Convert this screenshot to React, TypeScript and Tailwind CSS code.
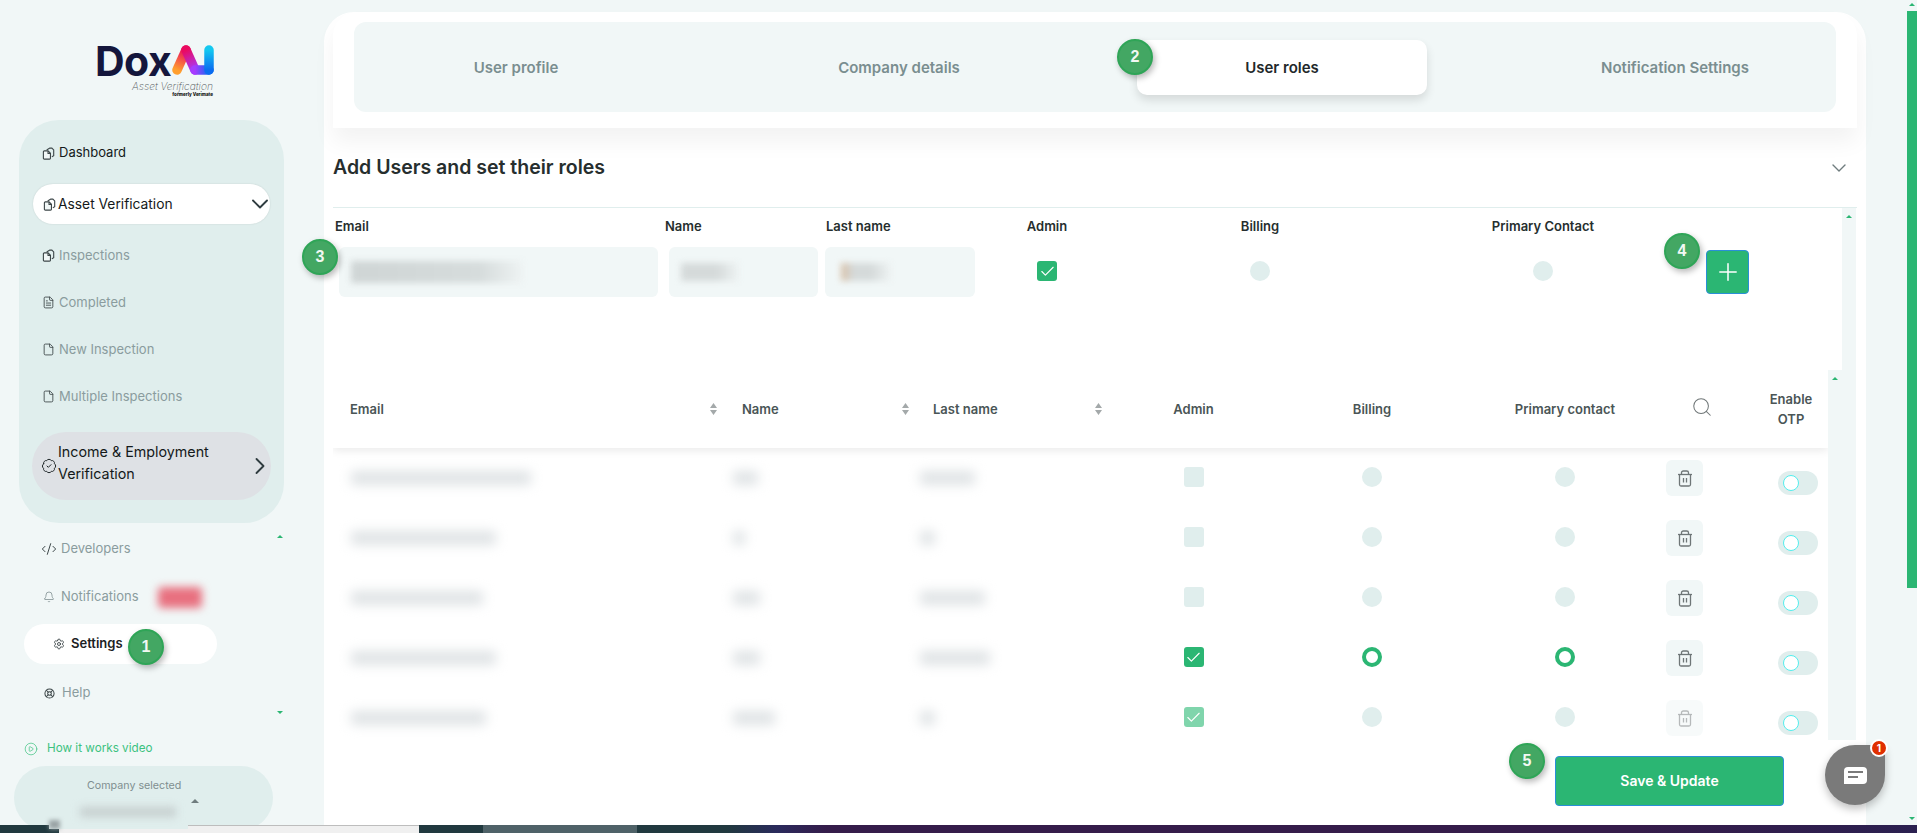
import {
  BadgeCheck,
  Bell,
  Check,
  ChevronDown,
  ChevronRight,
  CirclePlay,
  CodeXml,
  File,
  FileText,
  LifeBuoy,
  Plus,
  Search,
  Settings,
} from "lucide-react";

function DocsIcon({ className = "" }: { className?: string }) {
  return (
    <svg viewBox="0 0 14 14" className={`h-[13px] w-[13px] shrink-0 ${className}`} fill="none" stroke="#3c4648" strokeWidth="1.2">
      <path d="M5 3.2 8.4 1.2h2.2l2 2v6.2l-2 1" />
      <path d="M1.5 5.2a1 1 0 0 1 1-1h4l2.6 2.6v5.2a1 1 0 0 1-1 1H2.500a1 1 0 0 1-1-1z" fill="#f1f7f7" />
      <path d="M6.500 4.200v2.800h2.600" />
    </svg>
  );
}

function Arrow({ down = false, className = "" }: { down?: boolean; className?: string }) {
  return (
    <svg viewBox="0 0 6 3" className={`h-[3px] w-[6px] ${className}`} fill="#2bb673">
      <path d={down ? "M0 0h6L3 3z" : "M0 3h6L3 0z"} />
    </svg>
  );
}

function SortIcon() {
  return (
    <svg viewBox="0 0 7 12" className="mb-[2px] h-[12px] w-[7px]" fill="#a4a9aa">
      <path d="M3.500 0 7 5H0zM0 7h7l-3.500 5z" />
    </svg>
  );
}

function TrashIcon() {
  return (
    <svg viewBox="0 0 16 17" className="h-[17px] w-[16px]" fill="none" stroke="#6f7677" strokeWidth="1.3">
      <path d="M1 4.500h14" />
      <path d="M4.500 4.500V2.800a1.800 1.800 0 0 1 1.800-1.800h3.400a1.800 1.800 0 0 1 1.800 1.800v1.700" />
      <path d="M2.500 4.500v10a1.500 1.500 0 0 0 1.500 1.500h8a1.500 1.500 0 0 0 1.500-1.500v-10" />
      <path d="M6.500 8v4.500M9.500 8v4.500" />
    </svg>
  );
}

function StepBadge({ n, className }: { n: number; className: string }) {
  return (
    <div
      className={`absolute z-30 flex h-[36px] w-[36px] items-center justify-center rounded-full border-2 border-[#2fa557] bg-[#43a763] font-['Liberation_Sans',sans-serif] text-[16px] font-bold text-[#f2f8f3] shadow-[2px_3px_6px_rgba(0,0,0,0.28)] ${className}`}
    >
      {n}
    </div>
  );
}

function Logo() {
  return (
    <div className="ml-[97px] w-[116px]">
      <div className="flex h-[36px] items-end">
        <span className="ml-[-2px] font-['Inter',sans-serif] text-[41px] leading-[36px] font-bold tracking-[-0.5px] text-[#14163c]">
          Dox
        </span>
        <svg viewBox="0 0 46 36" className="mb-[-1px] ml-auto h-[36px] w-[46px] shrink-0 -mr-[3px]" fill="none" strokeWidth="9.500" strokeLinecap="round">
          <defs>
            <linearGradient id="a1" gradientUnits="userSpaceOnUse" x1="6" y1="26" x2="15" y2="6">
              <stop offset="0" stopColor="#ff9f2e" />
              <stop offset="1" stopColor="#ea0a60" />
            </linearGradient>
            <linearGradient id="a2" gradientUnits="userSpaceOnUse" x1="15" y1="6" x2="24" y2="26">
              <stop offset="0" stopColor="#ea0a60" />
              <stop offset="1" stopColor="#a63bff" />
            </linearGradient>
            <linearGradient id="a3" gradientUnits="userSpaceOnUse" x1="24" y1="26" x2="38" y2="26">
              <stop offset="0" stopColor="#a63bff" />
              <stop offset="1" stopColor="#0a6cf0" />
            </linearGradient>
            <linearGradient id="a4" gradientUnits="userSpaceOnUse" x1="38" y1="26" x2="38" y2="6">
              <stop offset="0" stopColor="#0a6cf0" />
              <stop offset="1" stopColor="#14c8f0" />
            </linearGradient>
          </defs>
          <path d="M6 26 15 6" stroke="url(#a1)" />
          <path d="M15 6l9 20" stroke="url(#a2)" />
          <path d="M24 26h14" stroke="url(#a3)" />
          <path d="M38 26V6" stroke="url(#a4)" />
        </svg>
      </div>
      <div className="mt-[2px] text-right text-[10.300px] leading-[11px] font-extralight text-[#555b60] italic">Asset Verification</div>
      <div className="text-right text-[4.500px] leading-[6px] font-extrabold text-[#111]">formerly Verimate</div>
    </div>
  );
}

const subItems = [
  { label: "Inspections", icon: <DocsIcon /> },
  { label: "Completed", icon: <FileText size={13} strokeWidth={1.6} color="#3c4648" /> },
  { label: "New Inspection", icon: <File size={13} strokeWidth={1.6} color="#3c4648" /> },
  { label: "Multiple Inspections", icon: <File size={13} strokeWidth={1.6} color="#3c4648" /> },
];

function Sidebar() {
  return (
    <aside className="flex w-[324px] shrink-0 flex-col overflow-hidden">
      <div className="h-[120px] shrink-0 pt-[43px]">
        <Logo />
      </div>

      <nav className="ml-[19px] h-[403px] w-[265px] shrink-0 rounded-[40px] bg-[#e0eeed] pt-[13px]">
        <div className="flex h-[40px] items-center gap-[4px] pl-[23px] text-[13px] text-[#14191a]">
          <DocsIcon />
          Dashboard
        </div>
        <div className="mt-[11px] ml-[14px] flex h-[40px] w-[237px] items-center rounded-full bg-white pl-[10px] text-[13.800px] text-[#14191a] shadow-[0_0_2px_rgba(0,0,0,0.12)]">
          <DocsIcon className="mr-[2px]" />
          Asset Verification
          <ChevronDown size={28} strokeWidth={1.6} color="#2f3c40" className="mr-[-4px] ml-auto" />
        </div>
        <div className="mt-[8px]">
          {subItems.map((item) => (
            <div key={item.label} className="flex h-[47px] items-center gap-[4px] pl-[23px] text-[13px] text-[#8a9c9e]">
              {item.icon}
              {item.label}
            </div>
          ))}
        </div>
        <div className="mt-[12px] ml-[13px] flex h-[68px] w-[239px] items-center rounded-[34px] bg-[#dee1e5] pl-[9px] text-[14.300px] leading-[22px] text-[#14191a]">
          <BadgeCheck size={16} strokeWidth={1.5} className="mr-[1px] shrink-0" color="#1e2628" />
          <span className="pb-[7px]">
            Income &amp; Employment
            <br />
            Verification
          </span>
          <ChevronRight size={28} strokeWidth={1.6} color="#2f3c40" className="mr-[-3px] ml-auto" />
        </div>
      </nav>

      <div className="relative h-[202px] shrink-0 pt-[2px] text-[13px] text-[#8a9c9e]">
        <Arrow className="absolute top-[12px] left-[277px]" />
        <Arrow down className="absolute top-[188px] left-[277px]" />
        <div className="flex h-[48px] items-center gap-[4px] pl-[41px]">
          <CodeXml size={16} strokeWidth={1.5} color="#3c4648" />
          Developers
        </div>
        <div className="flex h-[48px] items-center pl-[43px]">
          <Bell size={12} strokeWidth={1.5} color="#7a8a8c" className="mr-[6px]" />
          <span className="w-[97px]">Notifications</span>
          <div className="h-[21px] w-[44px] rounded-[4px] bg-[#e8707f] blur-[4px]" />
        </div>
        <div className="mt-[3px] ml-[24px] flex h-[40px] w-[193px] items-center gap-[6px] rounded-full bg-white pl-[29px] font-semibold text-[#1b2123]">
          <Settings size={12} strokeWidth={1.8} color="#3c4648" />
          Settings
        </div>
        <div className="mt-[5px] flex h-[48px] items-center gap-[7px] pl-[44px]">
          <LifeBuoy size={11} strokeWidth={2.2} color="#3c4648" />
          Help
        </div>
      </div>

      <div className="flex h-[41px] shrink-0 items-center gap-[9px] pt-[6px] pl-[24px] text-[11.700px] text-[#3cc27f]">
        <CirclePlay size={14} strokeWidth={1.2} />
        How it works video
      </div>
      <div className="ml-[14px] h-[64px] w-[259px] shrink-0 rounded-full bg-[#e0eeed] pt-[12px] pl-[73px] text-[10.700px] text-[#7f8f90]">
        Company selected
      </div>
    </aside>
  );
}

const tabs = ["User profile", "Company details", "User roles", "Notification Settings"];

function Tabs() {
  return (
    <div className="h-[116px] rounded-t-[24px] bg-white px-[21px] pt-[10px] shadow-[0_14px_22px_rgba(0,0,0,0.05)]">
      <div className="flex h-[90px] items-center gap-[93px] rounded-[12px] bg-[#f1f7f7] pl-[17px] text-[15px] font-semibold">
        {tabs.map((tab, i) => (
          <div
            key={tab}
            className={`flex h-[55px] w-[290px] shrink-0 items-center justify-center pt-[2px] ${
              i === 2
                ? "rounded-[10px] bg-white text-[#22282a] shadow-[0_5px_10px_rgba(0,0,0,0.12)]"
                : "text-[#7a8e90]"
            } ${i === 3 ? "ml-[10px]" : ""}`}
          >
            {tab}
          </div>
        ))}
      </div>
    </div>
  );
}

function CheckBox({ state }: { state: "off" | "on" | "faded" }) {
  const bg = state === "off" ? "bg-[#e0eeed]" : state === "on" ? "bg-[#2bb673]" : "bg-[#80d5ac]";
  return (
    <div className={`flex h-[20px] w-[20px] items-center justify-center rounded-[3px] ${bg}`}>
      {state !== "off" && <Check size={17} strokeWidth={1.6} color="#fff" />}
    </div>
  );
}

function Radio({ on = false }: { on?: boolean }) {
  return <div className={`h-[20px] w-[20px] rounded-full ${on ? "border-[4px] border-[#2bb673] bg-white" : "bg-[#e0eeed]"}`} />;
}

function Blurred({ w, className = "" }: { w: number; className?: string }) {
  return <div style={{ width: w }} className={`h-[14px] rounded-[2px] bg-[#dfe3e5] blur-[6px] ${className}`} />;
}

function AddUser() {
  const labelCls = "pb-[2px] text-[13px] font-semibold text-[#262e2e]";
  return (
    <div className="flex h-[162px]">
      <div className="w-[1509px]">
        <div className="grid grid-cols-[329px_160px_156px_138px_288px_278px_160px] grid-rows-[39px_50px] items-center">
          <div className={`${labelCls} pl-[2px]`}>Email</div>
          <div className={`${labelCls} pl-[3px]`}>Name</div>
          <div className={`${labelCls} pl-[4px]`}>Last name</div>
          <div className={`${labelCls} text-center`}>Admin</div>
          <div className={`${labelCls} text-center`}>Billing</div>
          <div className={`${labelCls} text-center`}>Primary Contact</div>
          <div />
          <div className="ml-[6px] flex h-[50px] w-[319px] items-center rounded-[6px] bg-[#f1f7f7] pl-[12px]">
            <div className="h-[22px] w-[172px] bg-[linear-gradient(90deg,#cfd5d5,#d6dcdc_75%,#eef3f3)] blur-[3px]" />
          </div>
          <div className="ml-[7px] flex h-[50px] w-[149px] items-center rounded-[6px] bg-[#f1f7f7] pl-[12px]">
            <div className="h-[18px] w-[58px] bg-[linear-gradient(90deg,#d5dada_60%,#eef3f3)] blur-[3px]" />
          </div>
          <div className="ml-[3px] flex h-[50px] w-[150px] items-center rounded-[6px] bg-[#f1f7f7] pl-[16px]">
            <div className="h-[18px] w-[50px] bg-[linear-gradient(90deg,#d8bfa6,#d5dada_25%,#d5dada_60%,#eef3f3)] blur-[3px]" />
          </div>
          <div className="flex justify-center pb-[2px]">
            <CheckBox state="on" />
          </div>
          <div className="flex justify-center pb-[2px]">
            <Radio />
          </div>
          <div className="flex justify-center pb-[2px]">
            <Radio />
          </div>
          <div className="ml-[24px]">
            <div className="flex h-[44px] w-[43px] items-center justify-center rounded-[4px] border border-[#2a8fd8] bg-[#2bb673]">
              <Plus size={28} strokeWidth={1.3} color="#fff" />
            </div>
          </div>
        </div>
      </div>
      <div className="flex w-[14px] justify-center bg-[#f1f7f7] pt-[7px]">
        <Arrow />
      </div>
    </div>
  );
}

const rows = [
  { email: 180, name: 25, last: 55, admin: "off", radios: false, faded: false },
  { email: 145, name: 12, last: 15, admin: "off", radios: false, faded: false },
  { email: 132, name: 27, last: 65, admin: "off", radios: false, faded: false },
  { email: 145, name: 27, last: 70, admin: "on", radios: true, faded: false },
  { email: 135, name: 42, last: 15, admin: "faded", radios: false, faded: true },
] as const;

const tableCols = "grid-cols-[389px_192px_193px_173px_184px_202px_74px_88px]";

function UsersTable() {
  return (
    <div className="flex h-[370px]">
      <div className="w-[1495px] overflow-hidden">
        <div className={`relative z-10 grid h-[78px] ${tableCols} items-center bg-white pt-[1px] text-[13px] font-semibold text-[#4a5556] shadow-[0_3px_8px_rgba(0,0,0,0.08)]`}>
          <div className="flex items-center justify-between pr-[5px] pl-[17px]">
            Email
            <SortIcon />
          </div>
          <div className="flex items-center justify-between pr-[5px] pl-[20px]">
            Name
            <SortIcon />
          </div>
          <div className="flex items-center justify-between pr-[5px] pl-[19px]">
            Last name
            <SortIcon />
          </div>
          <div className="text-center">Admin</div>
          <div className="text-center">Billing</div>
          <div className="text-center">Primary contact</div>
          <div className="pb-[6px] pl-[25px]">
            <Search size={22} strokeWidth={1.1} color="#6f7677" />
          </div>
          <div className="pb-[1px] pl-[14px] text-center leading-[20px]">
            Enable
            <br />
            OTP
          </div>
        </div>
        {rows.map((row, i) => (
          <div key={i} className={`grid h-[60px] ${tableCols}`}>
            <div className="pt-[23px] pl-[18px]">
              <Blurred w={row.email} />
            </div>
            <div className="pt-[23px] pl-[11px]">
              <Blurred w={row.name} />
            </div>
            <div className="pt-[23px] pl-[6px]">
              <Blurred w={row.last} />
            </div>
            <div className="flex justify-center pt-[19px]">
              <CheckBox state={row.admin} />
            </div>
            <div className="flex justify-center pt-[19px]">
              <Radio on={row.radios} />
            </div>
            <div className="flex justify-center pt-[19px]">
              <Radio on={row.radios} />
            </div>
            <div className="pt-[12px]">
              <div className={`flex h-[36px] w-[37px] items-center justify-center rounded-[6px] bg-[#f1f7f7] ${row.faded ? "opacity-50" : ""}`}>
                <TrashIcon />
              </div>
            </div>
            <div className="pt-[23px] pl-[38px]">
              <div className="flex h-[24px] w-[40px] items-center rounded-full bg-[#e0eeed] pl-[5px]">
                <div className="h-[16px] w-[16px] rounded-full border border-[#52eeee] bg-white" />
              </div>
            </div>
          </div>
        ))}
      </div>
      <div className="flex w-[14px] justify-center bg-[#f1f7f7] pt-[7px]">
        <Arrow />
      </div>
      <div className="w-[14px] bg-[#f1f7f7]" />
    </div>
  );
}

export default function App() {
  return (
    <div className="relative flex h-screen w-full flex-col overflow-hidden bg-[#f1f7f7] font-['Inter',sans-serif]">
      <div className="flex min-h-0 flex-1">
        <Sidebar />
        <main className="mt-[12px] w-[1542px] shrink-0 rounded-t-[30px] bg-white px-[9px]">
          <Tabs />
          <div className="flex h-[80px] items-center justify-between border-b border-[#e0eeed] pr-[6px]">
            <h2 className="text-[19.500px] font-semibold text-[#262e2e]">Add Users and set their roles</h2>
            <ChevronDown size={24} strokeWidth={1.4} color="#6f7c7e" />
          </div>
          <AddUser />
          <UsersTable />
          <div className="mt-[16px] mr-[73px] flex justify-end">
            <div className="flex h-[50px] w-[229px] items-center justify-center rounded-[4px] border border-[#2a8fd8] bg-[#2bb673] pb-[1px] text-[14px] font-semibold text-white">
              Save &amp; Update
            </div>
          </div>
        </main>
        <div className="ml-auto flex w-[10px] flex-col items-center">
          <Arrow className="mt-[3px]" />
          <div className="mt-[5px] h-[577px] w-full bg-[#2bb673]" />
          <Arrow down className="mt-auto mb-[5px]" />
        </div>
      </div>

      <div className="flex h-[8px] shrink-0">
        <div className="w-[59px] bg-[#21393f]" />
        <div className="w-[360px] border-t border-[#bdbdbd] bg-[#f0f0f0]" />
        <div className="w-[64px] bg-[#21393f]" />
        <div className="w-[154px] bg-[#4f6268]" />
        <div className="flex-1 bg-[linear-gradient(90deg,#21393f_0,#21393f_90px,#2a2a5c_140px,#351c4a_190px,#351c4a_1000px,#2b2050_100%)]" />
      </div>

      <div className="absolute top-[795px] left-[49px] z-20 flex h-[34px] w-[139px] items-center bg-[#e0eeed]">
        <div className="ml-[31px] h-[10px] w-[96px] bg-[#c6cfcf] blur-[4px]" />
      </div>
      <div className="absolute top-[820px] left-[49px] z-20 h-[9px] w-[11px] bg-[#9aa3a5] blur-[2px]" />
      <svg viewBox="0 0 8 4" className="absolute top-[799px] left-[191px] z-20 h-[4px] w-[8px]" fill="#6f7c7e">
        <path d="M0 4h8L4 0z" />
      </svg>

      <StepBadge n={1} className="top-[629px] left-[128px]" />
      <StepBadge n={2} className="top-[39px] left-[1117px]" />
      <StepBadge n={3} className="top-[239px] left-[302px]" />
      <StepBadge n={4} className="top-[233px] left-[1664px]" />
      <StepBadge n={5} className="top-[743px] left-[1509px]" />

      <div className="absolute top-[745px] left-[1825px] z-30 flex h-[60px] w-[60px] items-center justify-center rounded-[30px] rounded-tr-[6px] bg-[#7a7a7a] shadow-[0_4px_8px_rgba(0,0,0,0.25)]">
        <svg viewBox="0 0 23 17" className="h-[17px] w-[23px]">
          <path d="M4 0h15a4 4 0 0 1 4 4v9a4 4 0 0 1-4 4H0V4a4 4 0 0 1 4-4z" fill="#fff" />
          <path d="M4 5h15M4 10h10" stroke="#7a7a7a" strokeWidth="1.800" />
        </svg>
        <div className="absolute top-[-6px] right-[-3px] flex h-[18px] w-[18px] items-center justify-center rounded-full border-2 border-white bg-[#e02f00] text-[10px] font-bold text-white">
          1
        </div>
      </div>
    </div>
  );
}
